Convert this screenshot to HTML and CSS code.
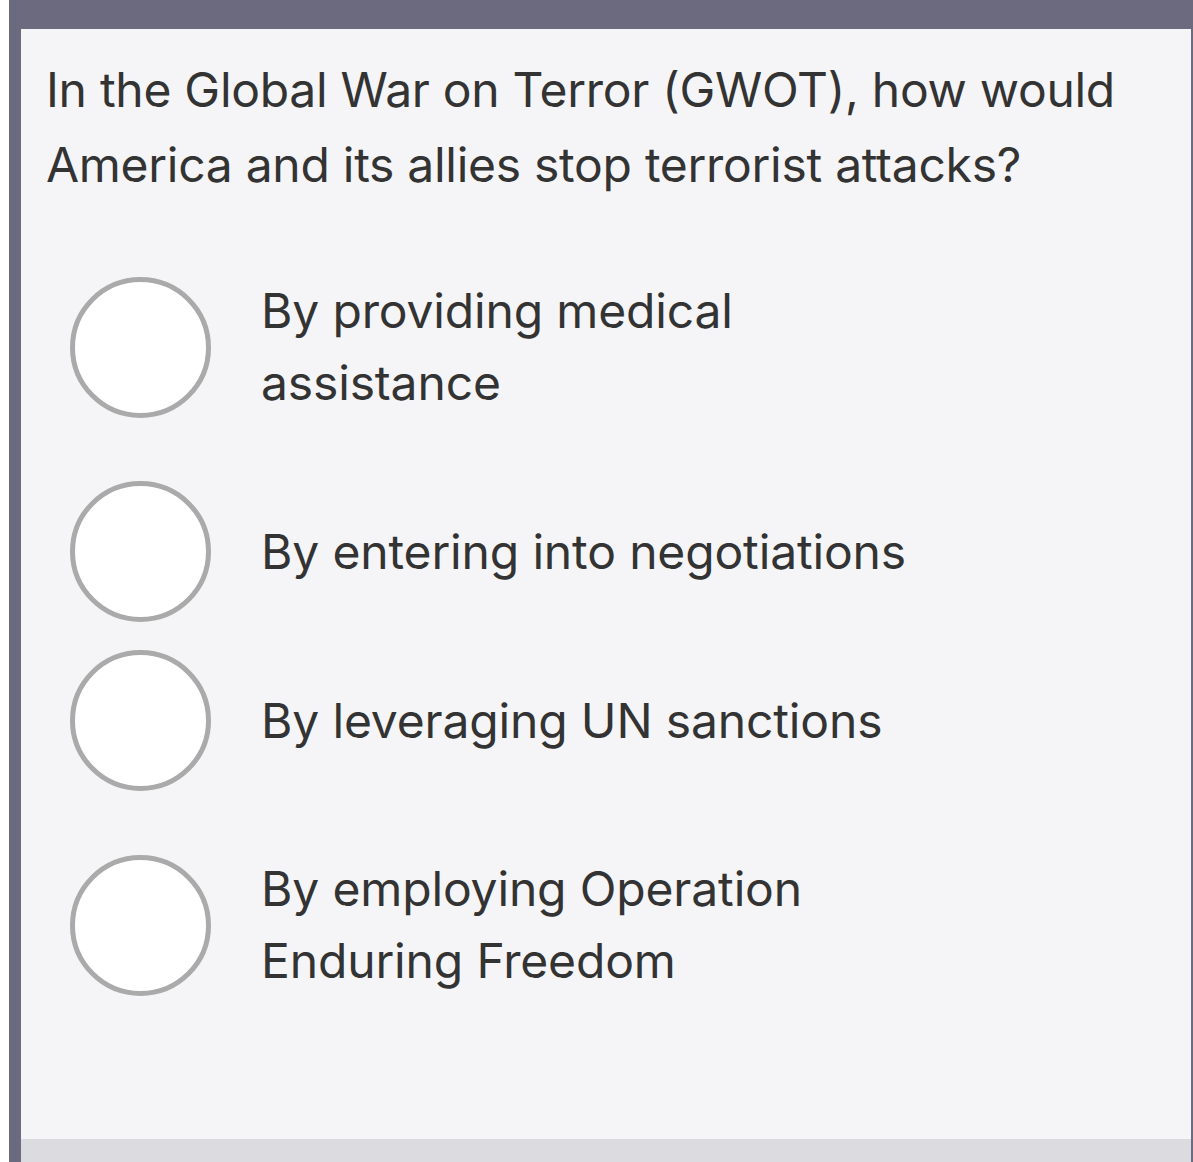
FILE: index.html
```html
<!DOCTYPE html>
<html lang="en">
<head>
  <meta charset="UTF-8">
  <title>Quiz</title>
  <link rel="stylesheet" href="styles.css">
</head>
<body>
  <div class="frame">
    <div class="card">
      <p class="question">In the Global War on Terror (GWOT), how would America and its allies stop terrorist attacks?</p>

      <ul class="choices">
        <li class="choice">
          <span class="radio"></span>
          <span class="label">By providing medical assistance</span>
        </li>
        <li class="choice">
          <span class="radio"></span>
          <span class="label">By entering into negotiations</span>
        </li>
        <li class="choice">
          <span class="radio"></span>
          <span class="label">By leveraging UN sanctions</span>
        </li>
        <li class="choice">
          <span class="radio"></span>
          <span class="label">By employing Operation Enduring Freedom</span>
        </li>
      </ul>
    </div>
    <div class="footer"></div>
  </div>
</body>
</html>
```

FILE: styles.css
```css
body {
  margin: 0;
  background-color: #fff;
  font-family: Inter, "Noto Sans", sans-serif;
  color: #333;
}
.frame {
  margin-left: 9px;
  padding: 29px 0 0 12px;
  background-color: #6b6a7e;
  height: 1133px;
  overflow: hidden;
}
.card {
  margin-right: 2px;
  height: 1110px;
  box-sizing: border-box;
  padding: 23px 26px 0 25px;
  background-color: #f5f5f7;
}
.question {
  margin: 0;
  font-size: 48px;
  line-height: 75px;
  letter-spacing: -0.28px;
}
.choices {
  list-style: none;
  margin: 39px 0 0 0;
  padding: 0 0 0 24px;
  display: flex;
  flex-direction: column;
  gap: 28px;
}
.choice {
  display: flex;
  align-items: center;
  gap: 50px;
}
.radio {
  flex: none;
  width: 141px;
  height: 141px;
  box-sizing: border-box;
  border: 5px solid #aaa;
  border-radius: 50%;
  background-color: #fff;
}
.label {
  max-width: 690px;
  padding: 34px 0;
  font-size: 48px;
  line-height: 72px;
  letter-spacing: -0.15px;
}
.footer {
  height: 24px;
  margin-right: 2px;
  background-color: #dcdbe0;
}
```
